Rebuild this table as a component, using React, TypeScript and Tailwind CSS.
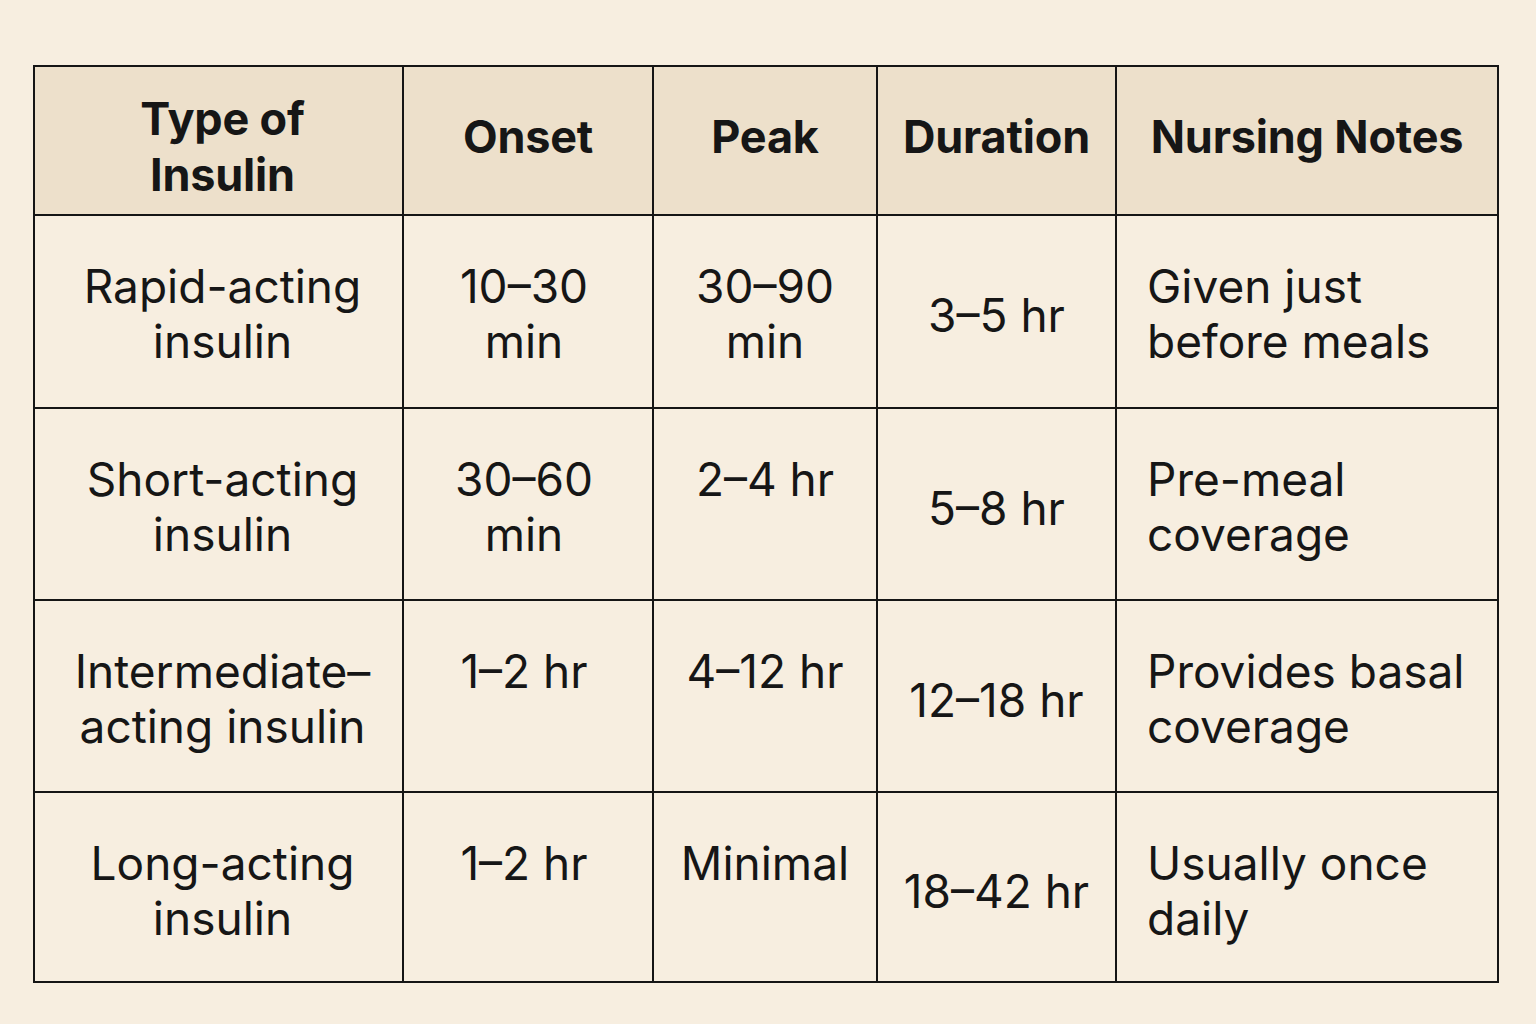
import React from "react";

/* ---------------- Table data ---------------- */
type Row = {
  type: string[];
  onset: string[];
  peak: string[];
  duration: string;
  notes: string[];
};

const ROWS: Row[] = [
  {
    type: ["Rapid-acting", "insulin"],
    onset: ["10–30", "min"],
    peak: ["30–90", "min"],
    duration: "3–5 hr",
    notes: ["Given just", "before meals"],
  },
  {
    type: ["Short-acting", "insulin"],
    onset: ["30–60", "min"],
    peak: ["2–4 hr"],
    duration: "5–8 hr",
    notes: ["Pre-meal", "coverage"],
  },
  {
    type: ["Intermediate–", "acting insulin"],
    onset: ["1–2 hr"],
    peak: ["4–12 hr"],
    duration: "12–18 hr",
    notes: ["Provides basal", "coverage"],
  },
  {
    type: ["Long-acting", "insulin"],
    onset: ["1–2 hr"],
    peak: ["Minimal"],
    duration: "18–42 hr",
    notes: ["Usually once", "daily"],
  },
];

const Lines = ({ lines }: { lines: string[] }) => (
  <>
    {lines.map((l, i) => (
      <React.Fragment key={i}>
        {i > 0 && <br />}
        {l}
      </React.Fragment>
    ))}
  </>
);

const HeaderCell = ({
  children,
  className = "",
}: {
  children: React.ReactNode;
  className?: string;
}) => (
  <div
    className={`flex items-center justify-center bg-[#ede0cb] text-center text-[45px] font-bold leading-[56px] tracking-[-0.2px] text-[#161616] ${className}`}
  >
    {children}
  </div>
);

export default function App() {
  return (
    <div
      className="min-h-screen w-full bg-[#f7eee0] pl-[33px] pt-[65px]"
      style={{ fontFamily: "Inter, 'Noto Sans', sans-serif" }}
    >
      <div className="grid w-fit grid-cols-[367px_248px_222px_237px_380px] grid-rows-[147px_191px_190px_190px_188px] gap-[2px] bg-[#151515] p-[2px]">
        {/* HEADER */}
        <HeaderCell className="pl-2 pt-[12px]">
          Type of
          <br />
          Insulin
        </HeaderCell>
        <HeaderCell className="pb-2">Onset</HeaderCell>
        <HeaderCell className="pb-2">Peak</HeaderCell>
        <HeaderCell className="pb-2">Duration</HeaderCell>
        <HeaderCell className="pb-2">Nursing Notes</HeaderCell>

        {/* BODY */}
        {ROWS.map((r, i) => (
          <React.Fragment key={i}>
            <div className="flex justify-center bg-[#f7eee0] pl-2 pt-[43px] text-center text-[46px] leading-[55px] text-[#161616]">
              <p>
                <Lines lines={r.type} />
              </p>
            </div>
            <div className="flex justify-center bg-[#f7eee0] pr-2 pt-[43px] text-center text-[46px] leading-[55px] text-[#161616]">
              <p>
                <Lines lines={r.onset} />
              </p>
            </div>
            <div className="flex justify-center bg-[#f7eee0] pt-[43px] text-center text-[46px] leading-[55px] text-[#161616]">
              <p>
                <Lines lines={r.peak} />
              </p>
            </div>
            <div className="flex items-center justify-center bg-[#f7eee0] pt-2 text-center text-[46px] leading-[55px] text-[#161616]">
              <p>{r.duration}</p>
            </div>
            <div className="flex bg-[#f7eee0] pl-[30px] pt-[43px] text-[46px] leading-[55px] text-[#161616]">
              <p>
                <Lines lines={r.notes} />
              </p>
            </div>
          </React.Fragment>
        ))}
      </div>
    </div>
  );
}
